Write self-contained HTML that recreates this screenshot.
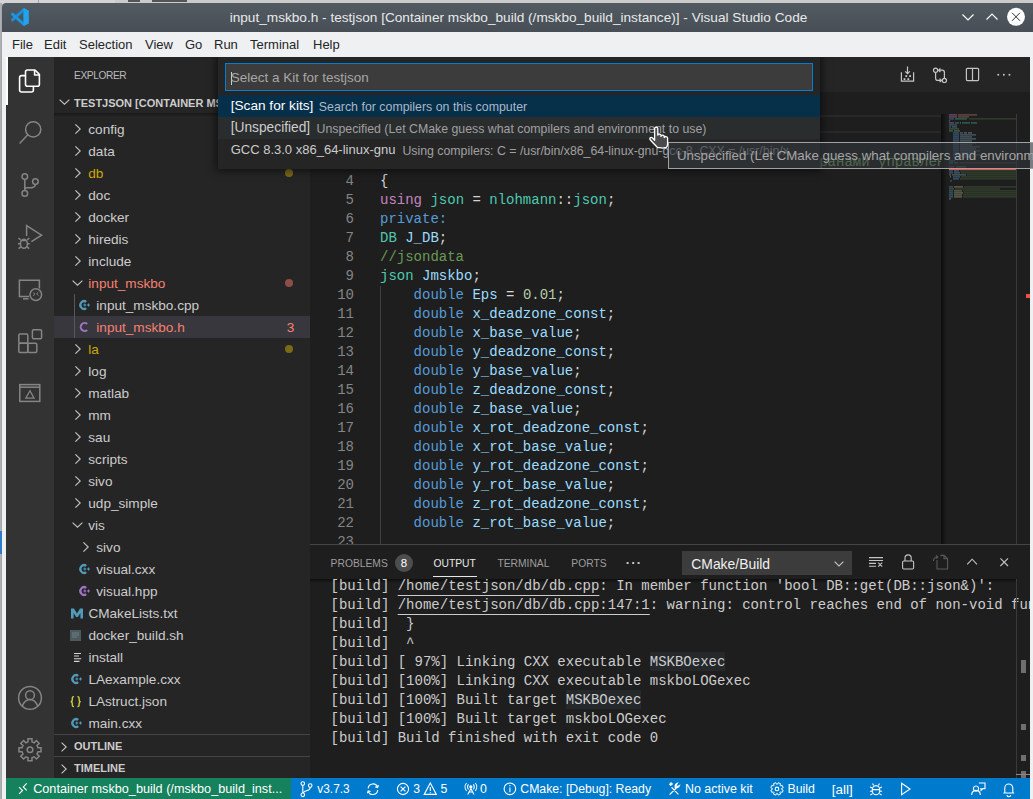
<!DOCTYPE html>
<html><head><meta charset="utf-8">
<style>
*{margin:0;padding:0;box-sizing:border-box}
html,body{width:1033px;height:799px;overflow:hidden;background:#dcdcdc;font-family:"Liberation Sans",sans-serif}
.a{position:absolute;white-space:pre}
svg{position:absolute;overflow:visible}
#win{position:absolute;left:2px;top:3px;width:1040px;height:800px;background:#eff0f1;border-radius:4px 0 0 0;overflow:hidden}
#title{left:0;top:0;width:1040px;height:28.5px;background:linear-gradient(#535b62,#474e55)}
#menu span{position:absolute;top:37px;font-size:13px;line-height:16px;color:#232627}
.mono{font-family:"Liberation Mono",monospace}
</style></head><body>
<!-- desktop behind -->
<div class="a" style="left:0;top:0;width:2px;height:799px;background:linear-gradient(90deg,#b3b5b8,#9fa1a4)"></div>
<div class="a" style="left:0;top:0;width:1033px;height:3px;background:#d4d4d4"></div>
<div class="a" style="left:115px;top:0;width:918px;height:3px;background:#cbcbcb"></div>
<div class="a" style="left:38px;top:0;width:1px;height:3px;background:#a0a4a8"></div>
<div class="a" style="left:128px;top:0;width:12px;height:2px;background:#555"></div>
<div class="a" style="left:152px;top:0;width:35px;height:2px;background:#555"></div>
<div class="a" style="left:0;top:531px;width:2px;height:23px;background:#2f7ccc"></div>
<div id="win">
  <div id="title" class="a"></div>
</div>
<!-- page-absolute layer -->
<div id="L" class="a" style="left:0;top:0;width:1033px;height:799px">
  <!-- title -->
  <div class="a" style="left:0;top:10px;width:1033px;text-align:center;color:#e8eaeb;font-size:13.64px;line-height:16px;padding-left:4px">input_mskbo.h - testjson [Container mskbo_build (/mskbo_build_instance)] - Visual Studio Code</div>
  <svg style="left:11px;top:8px" width="18" height="18" viewBox="0 0 18 18">
    <polygon points="12.6,0.3 17.6,2.6 17.6,15.4 12.6,17.7" fill="#24a7f0"/>
    <line x1="13" y1="1.5" x2="1.5" y2="11.8" stroke="#1a8fdb" stroke-width="3" stroke-linecap="round"/>
    <line x1="1.5" y1="6.2" x2="13" y2="16.5" stroke="#1a96e2" stroke-width="3" stroke-linecap="round"/>
    <polygon points="12.6,0.3 17.6,2.6 17.6,15.4 12.6,17.7" fill="#22a3ee"/>
  </svg>
  <svg style="left:962px;top:14px" width="12" height="7" viewBox="0 0 12 7"><polyline points="0.5,0.5 6,6 11.5,0.5" fill="none" stroke="#fcfcfc" stroke-width="1.2"/></svg>
  <svg style="left:986px;top:13px" width="12" height="7" viewBox="0 0 12 7"><polyline points="0.5,6.5 6,1 11.5,6.5" fill="none" stroke="#fcfcfc" stroke-width="1.2"/></svg>
  <svg style="left:1007px;top:8px" width="18" height="18" viewBox="0 0 18 18"><circle cx="9" cy="8.8" r="9" fill="#fcfcfc"/><path d="M5,4.8 L13,12.8 M13,4.8 L5,12.8" stroke="#31363b" stroke-width="1"/></svg>
  <!-- menu -->
  <div id="menu">
    <span style="left:12px">File</span><span style="left:44px">Edit</span><span style="left:79px">Selection</span><span style="left:145px">View</span><span style="left:185px">Go</span><span style="left:214px">Run</span><span style="left:250px">Terminal</span><span style="left:313px">Help</span>
  </div>
  <!-- activity bar -->
  <div class="a" style="left:6px;top:57px;width:48px;height:721px;background:#333333"></div>
  <div class="a" style="left:6px;top:57px;width:2px;height:48px;background:#ffffff"></div>
  <svg style="left:0;top:0" width="60" height="799">
    <g fill="none" stroke="#ffffff" stroke-width="1.6" stroke-linejoin="round">
      <rect x="19.6" y="75.6" width="13.8" height="16.4" rx="2"/>
      <path d="M27.5,70 H35 L39.4,74.4 V84.2 A2,2 0 0 1 37.4,86.2 H27.5 A2,2 0 0 1 25.5,84.2 V72 A2,2 0 0 1 27.5,70 Z" fill="#333333"/>
      <path d="M34.6,70 V75 H39.4"/>
    </g>
    <g fill="none" stroke="#858585" stroke-width="1.5">
      <circle cx="33.2" cy="129.4" r="7.6"/>
      <line x1="27.8" y1="134.8" x2="19.6" y2="143.4"/>
      <circle cx="24.8" cy="176.6" r="2.8"/>
      <circle cx="24.8" cy="193.4" r="2.8"/>
      <circle cx="35.4" cy="181.6" r="2.8"/>
      <path d="M24.8,179.4 V190.6 M35.4,184.4 C35.4,187 33,187.8 29,187.8 H27 C25.6,187.8 24.8,188.6 24.8,190"/>
      <path d="M26.6,236 V225.6 L41.6,235.2 L31.4,241.6"/>
      <ellipse cx="23.9" cy="243.8" rx="3.5" ry="4.5"/>
      <path d="M20.6,240.6 H27.2 M20.6,239.6 L18.4,238.2 M27.2,239.6 L29.4,238.2 M20.4,243.8 H18 M27.4,243.8 H29.8 M20.8,246.8 L18.6,248.6 M27,246.8 L29.2,248.6"/>
      <path d="M29,296.5 H19.4 V280.2 H39.4 V288.4"/>
      <line x1="23" y1="298.8" x2="28.6" y2="298.8"/>
      <circle cx="35.8" cy="294.6" r="5.8"/>
      <path d="M33.2,292.6 l1.8,1.6 l-1.8,1.6 M38.4,292.2 l-1.8,1.6 l1.8,1.6" stroke-width="1"/>
      <rect x="18.8" y="334" width="9" height="9.2" rx="1.2"/>
      <rect x="18.8" y="343.2" width="9" height="9.2" rx="1.2"/>
      <rect x="27.8" y="343.2" width="9" height="9.2" rx="1.2"/>
      <rect x="32.4" y="329.8" width="9.2" height="9" rx="1.2"/>
      <rect x="19.8" y="384.6" width="20" height="16.8"/>
      <line x1="19.8" y1="387.2" x2="39.8" y2="387.2"/>
      <path d="M30,390.8 L34,398.2 L25.8,398.2 Z" stroke-width="1.3"/>
      <circle cx="30" cy="697.9" r="11.4"/>
      <circle cx="30" cy="695.2" r="4.4"/>
      <path d="M22.2,706.2 C24,701.8 26.8,699.6 30,699.6 C33.2,699.6 36,701.8 37.8,706.2"/>
    </g>
    <path fill="none" stroke="#858585" stroke-width="1.5" d="M28.05,741.84 L27.99,738.78 L32.01,738.78 L31.95,741.84 L34.25,742.79 L36.37,740.59 L39.21,743.43 L37.01,745.55 L37.96,747.85 L41.02,747.79 L41.02,751.81 L37.96,751.75 L37.01,754.05 L39.21,756.17 L36.37,759.01 L34.25,756.81 L31.95,757.76 L32.01,760.82 L27.99,760.82 L28.05,757.76 L25.75,756.81 L23.63,759.01 L20.79,756.17 L22.99,754.05 L22.04,751.75 L18.98,751.81 L18.98,747.79 L22.04,747.85 L22.99,745.55 L20.79,743.43 L23.63,740.59 L25.75,742.79 Z"/>
    <circle cx="30" cy="749.7" r="2.8" fill="none" stroke="#858585" stroke-width="1.5"/>
  </svg>

  <!-- sidebar -->
  <div class="a" style="left:54px;top:57px;width:256px;height:721px;background:#252526"></div>
  <div class="a" style="left:74px;top:69px;font-size:10.2px;line-height:14px;color:#bbbbbb;letter-spacing:-0.4px">EXPLORER</div>
  <div class="a" style="left:54px;top:113px;width:256px;height:4px;background:linear-gradient(rgba(0,0,0,0.35),rgba(0,0,0,0))"></div>
  <svg style="left:59px;top:99px" width="11" height="6" viewBox="0 0 11 6"><polyline points="0.6,0.6 5.5,5.2 10.4,0.6" fill="none" stroke="#c5c5c5" stroke-width="1.1"/></svg>
  <div class="a" style="left:74px;top:95.8px;font-size:11px;line-height:14px;font-weight:bold;color:#cccccc">TESTJSON [CONTAINER MSKBO_BUILD (/MSKBO_BUILD_INSTANCE)]</div>
<svg style="left:74.6px;top:124.1px" width="6" height="10" viewBox="0 0 6 10"><polyline points="0.4,0.4 5.2,5 0.4,9.6" fill="none" stroke="#c5c5c5" stroke-width="1.1"/></svg>
<div class="a" style="left:88.3px;top:121.0px;font-size:13.6px;line-height:18px;color:#cccccc">config</div>
<svg style="left:74.6px;top:146.1px" width="6" height="10" viewBox="0 0 6 10"><polyline points="0.4,0.4 5.2,5 0.4,9.6" fill="none" stroke="#c5c5c5" stroke-width="1.1"/></svg>
<div class="a" style="left:88.3px;top:143.0px;font-size:13.6px;line-height:18px;color:#cccccc">data</div>
<svg style="left:74.6px;top:168.1px" width="6" height="10" viewBox="0 0 6 10"><polyline points="0.4,0.4 5.2,5 0.4,9.6" fill="none" stroke="#c5c5c5" stroke-width="1.1"/></svg>
<div class="a" style="left:88.3px;top:165.0px;font-size:13.6px;line-height:18px;color:#cca700">db</div>
<div class="a" style="left:285px;top:169.3px;width:8px;height:8px;border-radius:4px;background:#7a6a17"></div>
<svg style="left:74.6px;top:190.1px" width="6" height="10" viewBox="0 0 6 10"><polyline points="0.4,0.4 5.2,5 0.4,9.6" fill="none" stroke="#c5c5c5" stroke-width="1.1"/></svg>
<div class="a" style="left:88.3px;top:187.0px;font-size:13.6px;line-height:18px;color:#cccccc">doc</div>
<svg style="left:74.6px;top:212.1px" width="6" height="10" viewBox="0 0 6 10"><polyline points="0.4,0.4 5.2,5 0.4,9.6" fill="none" stroke="#c5c5c5" stroke-width="1.1"/></svg>
<div class="a" style="left:88.3px;top:209.0px;font-size:13.6px;line-height:18px;color:#cccccc">docker</div>
<svg style="left:74.6px;top:234.1px" width="6" height="10" viewBox="0 0 6 10"><polyline points="0.4,0.4 5.2,5 0.4,9.6" fill="none" stroke="#c5c5c5" stroke-width="1.1"/></svg>
<div class="a" style="left:88.3px;top:231.0px;font-size:13.6px;line-height:18px;color:#cccccc">hiredis</div>
<svg style="left:74.6px;top:256.1px" width="6" height="10" viewBox="0 0 6 10"><polyline points="0.4,0.4 5.2,5 0.4,9.6" fill="none" stroke="#c5c5c5" stroke-width="1.1"/></svg>
<div class="a" style="left:88.3px;top:253.0px;font-size:13.6px;line-height:18px;color:#cccccc">include</div>
<svg style="left:71.6px;top:280.3px" width="11" height="6" viewBox="0 0 11 6"><polyline points="0.6,0.6 5.5,5.2 10.4,0.6" fill="none" stroke="#c5c5c5" stroke-width="1.1"/></svg>
<div class="a" style="left:88.3px;top:275.0px;font-size:13.6px;line-height:18px;color:#f88070">input_mskbo</div>
<div class="a" style="left:285px;top:279.3px;width:8px;height:8px;border-radius:4px;background:#8c4e47"></div>
<svg style="left:79.0px;top:300.3px" width="11" height="10" viewBox="0 0 11 10"><path d="M7.2,1.9 A3.6,3.9 0 1 0 7.2,8.1" fill="none" stroke="#519aba" stroke-width="2.3"/><path d="M4.3,5 h3 M5.8,3.5 v3 M8,5 h3 M9.5,3.5 v3" stroke="#519aba" stroke-width="1.05"/></svg>
<div class="a" style="left:96.3px;top:297.0px;font-size:13.6px;line-height:18px;color:#cccccc">input_mskbo.cpp</div>
<div class="a" style="left:54px;top:316.0px;width:256px;height:22px;background:#37373d"></div>
<svg style="left:79.0px;top:322.3px" width="10" height="10" viewBox="0 0 10 10"><path d="M8.2,2 A3.9,4 0 1 0 8.2,8" fill="none" stroke="#a074c4" stroke-width="2"/></svg>
<div class="a" style="left:96.3px;top:319.0px;font-size:13.6px;line-height:18px;color:#f88070">input_mskbo.h</div>
<div class="a" style="left:286.8px;top:319.0px;font-size:13.6px;line-height:18px;color:#f88070">3</div>
<svg style="left:74.6px;top:344.1px" width="6" height="10" viewBox="0 0 6 10"><polyline points="0.4,0.4 5.2,5 0.4,9.6" fill="none" stroke="#c5c5c5" stroke-width="1.1"/></svg>
<div class="a" style="left:88.3px;top:341.0px;font-size:13.6px;line-height:18px;color:#cca700">la</div>
<div class="a" style="left:285px;top:345.3px;width:8px;height:8px;border-radius:4px;background:#7a6a17"></div>
<svg style="left:74.6px;top:366.1px" width="6" height="10" viewBox="0 0 6 10"><polyline points="0.4,0.4 5.2,5 0.4,9.6" fill="none" stroke="#c5c5c5" stroke-width="1.1"/></svg>
<div class="a" style="left:88.3px;top:363.0px;font-size:13.6px;line-height:18px;color:#cccccc">log</div>
<svg style="left:74.6px;top:388.1px" width="6" height="10" viewBox="0 0 6 10"><polyline points="0.4,0.4 5.2,5 0.4,9.6" fill="none" stroke="#c5c5c5" stroke-width="1.1"/></svg>
<div class="a" style="left:88.3px;top:385.0px;font-size:13.6px;line-height:18px;color:#cccccc">matlab</div>
<svg style="left:74.6px;top:410.1px" width="6" height="10" viewBox="0 0 6 10"><polyline points="0.4,0.4 5.2,5 0.4,9.6" fill="none" stroke="#c5c5c5" stroke-width="1.1"/></svg>
<div class="a" style="left:88.3px;top:407.0px;font-size:13.6px;line-height:18px;color:#cccccc">mm</div>
<svg style="left:74.6px;top:432.1px" width="6" height="10" viewBox="0 0 6 10"><polyline points="0.4,0.4 5.2,5 0.4,9.6" fill="none" stroke="#c5c5c5" stroke-width="1.1"/></svg>
<div class="a" style="left:88.3px;top:429.0px;font-size:13.6px;line-height:18px;color:#cccccc">sau</div>
<svg style="left:74.6px;top:454.1px" width="6" height="10" viewBox="0 0 6 10"><polyline points="0.4,0.4 5.2,5 0.4,9.6" fill="none" stroke="#c5c5c5" stroke-width="1.1"/></svg>
<div class="a" style="left:88.3px;top:451.0px;font-size:13.6px;line-height:18px;color:#cccccc">scripts</div>
<svg style="left:74.6px;top:476.1px" width="6" height="10" viewBox="0 0 6 10"><polyline points="0.4,0.4 5.2,5 0.4,9.6" fill="none" stroke="#c5c5c5" stroke-width="1.1"/></svg>
<div class="a" style="left:88.3px;top:473.0px;font-size:13.6px;line-height:18px;color:#cccccc">sivo</div>
<svg style="left:74.6px;top:498.1px" width="6" height="10" viewBox="0 0 6 10"><polyline points="0.4,0.4 5.2,5 0.4,9.6" fill="none" stroke="#c5c5c5" stroke-width="1.1"/></svg>
<div class="a" style="left:88.3px;top:495.0px;font-size:13.6px;line-height:18px;color:#cccccc">udp_simple</div>
<svg style="left:71.6px;top:522.3px" width="11" height="6" viewBox="0 0 11 6"><polyline points="0.6,0.6 5.5,5.2 10.4,0.6" fill="none" stroke="#c5c5c5" stroke-width="1.1"/></svg>
<div class="a" style="left:88.3px;top:517.0px;font-size:13.6px;line-height:18px;color:#cccccc">vis</div>
<svg style="left:82.8px;top:542.1px" width="6" height="10" viewBox="0 0 6 10"><polyline points="0.4,0.4 5.2,5 0.4,9.6" fill="none" stroke="#c5c5c5" stroke-width="1.1"/></svg>
<div class="a" style="left:96.3px;top:539.0px;font-size:13.6px;line-height:18px;color:#cccccc">sivo</div>
<svg style="left:79.0px;top:564.3px" width="11" height="10" viewBox="0 0 11 10"><path d="M7.2,1.9 A3.6,3.9 0 1 0 7.2,8.1" fill="none" stroke="#519aba" stroke-width="2.3"/><path d="M4.3,5 h3 M5.8,3.5 v3 M8,5 h3 M9.5,3.5 v3" stroke="#519aba" stroke-width="1.05"/></svg>
<div class="a" style="left:96.3px;top:561.0px;font-size:13.6px;line-height:18px;color:#cccccc">visual.cxx</div>
<svg style="left:79.0px;top:586.3px" width="11" height="10" viewBox="0 0 11 10"><path d="M7.2,1.9 A3.6,3.9 0 1 0 7.2,8.1" fill="none" stroke="#a074c4" stroke-width="2.3"/><path d="M4.3,5 h3 M5.8,3.5 v3 M8,5 h3 M9.5,3.5 v3" stroke="#a074c4" stroke-width="1.05"/></svg>
<div class="a" style="left:96.3px;top:583.0px;font-size:13.6px;line-height:18px;color:#cccccc">visual.hpp</div>
<svg style="left:70.5px;top:607.8px" width="12" height="11" viewBox="0 0 12 11"><path d="M0,10.5 V0.5 H3 L6,5.5 L9,0.5 H12 V10.5 H9.4 V5 L6.9,9 H5.1 L2.6,5 V10.5 Z" fill="#519aba"/></svg>
<div class="a" style="left:88.4px;top:605.0px;font-size:13.6px;line-height:18px;color:#cccccc">CMakeLists.txt</div>
<svg style="left:70.0px;top:629.8px" width="11" height="11" viewBox="0 0 11 11"><rect x="0" y="0" width="11" height="11" fill="#4d5a5e"/><path d="M2,3 h7 M2,5 h7 M2,7 h5" stroke="#6d8086" stroke-width="1"/></svg>
<div class="a" style="left:88.4px;top:627.0px;font-size:13.6px;line-height:18px;color:#cccccc">docker_build.sh</div>
<svg style="left:73.8px;top:652.8px" width="8" height="9" viewBox="0 0 8 9"><path d="M0,0.5 h7 M0,3 h5 M0,5.8 h7.2 M0,8.4 h5.5" stroke="#d4d7d6" stroke-width="1.1"/></svg>
<div class="a" style="left:88.4px;top:649.0px;font-size:13.6px;line-height:18px;color:#cccccc">install</div>
<svg style="left:70.5px;top:674.3px" width="11" height="10" viewBox="0 0 11 10"><path d="M7.2,1.9 A3.6,3.9 0 1 0 7.2,8.1" fill="none" stroke="#519aba" stroke-width="2.3"/><path d="M4.3,5 h3 M5.8,3.5 v3 M8,5 h3 M9.5,3.5 v3" stroke="#519aba" stroke-width="1.05"/></svg>
<div class="a" style="left:88.4px;top:671.0px;font-size:13.6px;line-height:18px;color:#cccccc">LAexample.cxx</div>
<svg style="left:70px;top:695.9px" width="12" height="12" viewBox="0 0 12 12"><path d="M4,0.6 C2.2,0.6 2.3,1.8 2.3,3.4 C2.3,4.9 1.7,5.6 0.6,5.6 C1.7,5.6 2.3,6.3 2.3,7.8 C2.3,9.4 2.2,10.6 4,10.6 M7.4,0.6 C9.2,0.6 9.1,1.8 9.1,3.4 C9.1,4.9 9.7,5.6 10.8,5.6 C9.7,5.6 9.1,6.3 9.1,7.8 C9.1,9.4 9.2,10.6 7.4,10.6" fill="none" stroke="#cbcb41" stroke-width="1.4"/></svg>
<div class="a" style="left:88.4px;top:693.0px;font-size:13.6px;line-height:18px;color:#cccccc">LAstruct.json</div>
<svg style="left:70.5px;top:718.3px" width="11" height="10" viewBox="0 0 11 10"><path d="M7.2,1.9 A3.6,3.9 0 1 0 7.2,8.1" fill="none" stroke="#519aba" stroke-width="2.3"/><path d="M4.3,5 h3 M5.8,3.5 v3 M8,5 h3 M9.5,3.5 v3" stroke="#519aba" stroke-width="1.05"/></svg>
<div class="a" style="left:88.4px;top:715.0px;font-size:13.6px;line-height:18px;color:#cccccc">main.cxx</div>
<div class="a" style="left:74px;top:294px;width:1px;height:44px;background:#585858"></div>
<div class="a" style="left:310px;top:57px;width:720px;height:487px;background:#1e1e1e;overflow:hidden">
<div class="a" style="left:0;top:0;width:720px;height:35px;background:#252526"></div>
<div class="a" style="left:70px;top:57.6px;width:600px;height:18px;border:2px solid #282828"></div>
<div class="a mono" style="left:509.2px;top:96.2px;font-size:14px;line-height:19px;color:#7fb56a">ранами управления</div>
<div class="a mono" style="left:0;top:115.3px;width:44px;text-align:right;font-size:14px;line-height:19px;color:#858585">4</div>
<div class="a mono" style="left:70px;top:115.3px;font-size:14px;line-height:19px"><span style="color:#d4d4d4">{</span></div>
<div class="a mono" style="left:0;top:134.3px;width:44px;text-align:right;font-size:14px;line-height:19px;color:#858585">5</div>
<div class="a mono" style="left:70px;top:134.3px;font-size:14px;line-height:19px"><span style="color:#c586c0">using</span><span style="color:#d4d4d4"> </span><span style="color:#4ec9b0">json</span><span style="color:#d4d4d4"> = </span><span style="color:#4ec9b0">nlohmann</span><span style="color:#d4d4d4">::</span><span style="color:#4ec9b0">json</span><span style="color:#d4d4d4">;</span></div>
<div class="a mono" style="left:0;top:153.3px;width:44px;text-align:right;font-size:14px;line-height:19px;color:#858585">6</div>
<div class="a mono" style="left:70px;top:153.3px;font-size:14px;line-height:19px"><span style="color:#569cd6">private:</span></div>
<div class="a mono" style="left:0;top:172.3px;width:44px;text-align:right;font-size:14px;line-height:19px;color:#858585">7</div>
<div class="a mono" style="left:70px;top:172.3px;font-size:14px;line-height:19px"><span style="color:#4ec9b0">DB</span><span style="color:#d4d4d4"> </span><span style="color:#9cdcfe">J_DB</span><span style="color:#d4d4d4">;</span></div>
<div class="a mono" style="left:0;top:191.3px;width:44px;text-align:right;font-size:14px;line-height:19px;color:#858585">8</div>
<div class="a mono" style="left:70px;top:191.3px;font-size:14px;line-height:19px"><span style="color:#6a9955">//jsondata</span></div>
<div class="a mono" style="left:0;top:210.3px;width:44px;text-align:right;font-size:14px;line-height:19px;color:#858585">9</div>
<div class="a mono" style="left:70px;top:210.3px;font-size:14px;line-height:19px"><span style="color:#4ec9b0">json</span><span style="color:#d4d4d4"> </span><span style="color:#9cdcfe">Jmskbo</span><span style="color:#d4d4d4">;</span></div>
<div class="a mono" style="left:0;top:229.3px;width:44px;text-align:right;font-size:14px;line-height:19px;color:#858585">10</div>
<div class="a mono" style="left:70px;top:229.3px;font-size:14px;line-height:19px"><span style="color:#d4d4d4">    </span><span style="color:#569cd6">double</span><span style="color:#d4d4d4"> </span><span style="color:#9cdcfe">Eps</span><span style="color:#d4d4d4"> = </span><span style="color:#b5cea8">0.01</span><span style="color:#d4d4d4">;</span></div>
<div class="a mono" style="left:0;top:248.3px;width:44px;text-align:right;font-size:14px;line-height:19px;color:#858585">11</div>
<div class="a mono" style="left:70px;top:248.3px;font-size:14px;line-height:19px"><span style="color:#d4d4d4">    </span><span style="color:#569cd6">double</span><span style="color:#d4d4d4"> </span><span style="color:#9cdcfe">x_deadzone_const</span><span style="color:#d4d4d4">;</span></div>
<div class="a mono" style="left:0;top:267.3px;width:44px;text-align:right;font-size:14px;line-height:19px;color:#858585">12</div>
<div class="a mono" style="left:70px;top:267.3px;font-size:14px;line-height:19px"><span style="color:#d4d4d4">    </span><span style="color:#569cd6">double</span><span style="color:#d4d4d4"> </span><span style="color:#9cdcfe">x_base_value</span><span style="color:#d4d4d4">;</span></div>
<div class="a mono" style="left:0;top:286.3px;width:44px;text-align:right;font-size:14px;line-height:19px;color:#858585">13</div>
<div class="a mono" style="left:70px;top:286.3px;font-size:14px;line-height:19px"><span style="color:#d4d4d4">    </span><span style="color:#569cd6">double</span><span style="color:#d4d4d4"> </span><span style="color:#9cdcfe">y_deadzone_const</span><span style="color:#d4d4d4">;</span></div>
<div class="a mono" style="left:0;top:305.3px;width:44px;text-align:right;font-size:14px;line-height:19px;color:#858585">14</div>
<div class="a mono" style="left:70px;top:305.3px;font-size:14px;line-height:19px"><span style="color:#d4d4d4">    </span><span style="color:#569cd6">double</span><span style="color:#d4d4d4"> </span><span style="color:#9cdcfe">y_base_value</span><span style="color:#d4d4d4">;</span></div>
<div class="a mono" style="left:0;top:324.3px;width:44px;text-align:right;font-size:14px;line-height:19px;color:#858585">15</div>
<div class="a mono" style="left:70px;top:324.3px;font-size:14px;line-height:19px"><span style="color:#d4d4d4">    </span><span style="color:#569cd6">double</span><span style="color:#d4d4d4"> </span><span style="color:#9cdcfe">z_deadzone_const</span><span style="color:#d4d4d4">;</span></div>
<div class="a mono" style="left:0;top:343.3px;width:44px;text-align:right;font-size:14px;line-height:19px;color:#858585">16</div>
<div class="a mono" style="left:70px;top:343.3px;font-size:14px;line-height:19px"><span style="color:#d4d4d4">    </span><span style="color:#569cd6">double</span><span style="color:#d4d4d4"> </span><span style="color:#9cdcfe">z_base_value</span><span style="color:#d4d4d4">;</span></div>
<div class="a mono" style="left:0;top:362.3px;width:44px;text-align:right;font-size:14px;line-height:19px;color:#858585">17</div>
<div class="a mono" style="left:70px;top:362.3px;font-size:14px;line-height:19px"><span style="color:#d4d4d4">    </span><span style="color:#569cd6">double</span><span style="color:#d4d4d4"> </span><span style="color:#9cdcfe">x_rot_deadzone_const</span><span style="color:#d4d4d4">;</span></div>
<div class="a mono" style="left:0;top:381.3px;width:44px;text-align:right;font-size:14px;line-height:19px;color:#858585">18</div>
<div class="a mono" style="left:70px;top:381.3px;font-size:14px;line-height:19px"><span style="color:#d4d4d4">    </span><span style="color:#569cd6">double</span><span style="color:#d4d4d4"> </span><span style="color:#9cdcfe">x_rot_base_value</span><span style="color:#d4d4d4">;</span></div>
<div class="a mono" style="left:0;top:400.3px;width:44px;text-align:right;font-size:14px;line-height:19px;color:#858585">19</div>
<div class="a mono" style="left:70px;top:400.3px;font-size:14px;line-height:19px"><span style="color:#d4d4d4">    </span><span style="color:#569cd6">double</span><span style="color:#d4d4d4"> </span><span style="color:#9cdcfe">y_rot_deadzone_const</span><span style="color:#d4d4d4">;</span></div>
<div class="a mono" style="left:0;top:419.3px;width:44px;text-align:right;font-size:14px;line-height:19px;color:#858585">20</div>
<div class="a mono" style="left:70px;top:419.3px;font-size:14px;line-height:19px"><span style="color:#d4d4d4">    </span><span style="color:#569cd6">double</span><span style="color:#d4d4d4"> </span><span style="color:#9cdcfe">y_rot_base_value</span><span style="color:#d4d4d4">;</span></div>
<div class="a mono" style="left:0;top:438.3px;width:44px;text-align:right;font-size:14px;line-height:19px;color:#858585">21</div>
<div class="a mono" style="left:70px;top:438.3px;font-size:14px;line-height:19px"><span style="color:#d4d4d4">    </span><span style="color:#569cd6">double</span><span style="color:#d4d4d4"> </span><span style="color:#9cdcfe">z_rot_deadzone_const</span><span style="color:#d4d4d4">;</span></div>
<div class="a mono" style="left:0;top:457.3px;width:44px;text-align:right;font-size:14px;line-height:19px;color:#858585">22</div>
<div class="a mono" style="left:70px;top:457.3px;font-size:14px;line-height:19px"><span style="color:#d4d4d4">    </span><span style="color:#569cd6">double</span><span style="color:#d4d4d4"> </span><span style="color:#9cdcfe">z_rot_base_value</span><span style="color:#d4d4d4">;</span></div>
<div class="a mono" style="left:0;top:476.3px;width:44px;text-align:right;font-size:14px;line-height:19px;color:#858585">23</div>
<div class="a" style="left:70px;top:228.5px;width:1px;height:300px;background:#404040"></div>
<div class="a" style="left:631px;top:57px;width:75px;height:431px;background:#1e1e1e"></div>
<div class="a" style="left:631px;top:57px;width:6px;height:431px;background:linear-gradient(90deg,#000 0,rgba(0,0,0,0) 6px);opacity:0.6"></div>
<div class="a" style="left:706px;top:57px;width:1px;height:431px;background:#3a3a3a"></div>
<div class="a" style="left:716px;top:237px;width:4px;height:4px;background:#f14c4c"></div>
</div>
<svg style="left:0;top:0" width="1033" height="100"><g fill="none" stroke="#c5c5c5" stroke-width="1.2">
<path d="M901.4,72.2 V81.2 H913.6 V72.2"/><path d="M907.5,66.6 V73.6 M905.2,71.4 L907.5,73.7 L909.8,71.4"/>
<circle cx="935.6" cy="70.2" r="2.1"/><circle cx="944.4" cy="80.4" r="2.1"/>
<path d="M935.6,72.3 V78.2 Q935.6,80.4 937.8,80.4 H941.4 M939.6,78.6 L941.4,80.4 L939.6,82.2"/>
<path d="M944.4,78.3 V72.4 Q944.4,70.2 942.2,70.2 H938.6 M940.4,68.4 L938.6,70.2 L940.4,72"/>
<rect x="966.4" y="68.4" width="12.2" height="12.2" rx="1"/><path d="M972.5,68.4 V80.6"/>
</g><g fill="#c5c5c5"><rect x="905.4" y="75.2" width="1.8" height="1.8"/><rect x="909.2" y="75.2" width="1.8" height="1.8"/><rect x="903.6" y="78.2" width="1.8" height="1.8"/><rect x="907.4" y="78.2" width="1.8" height="1.8"/>
<rect x="997.4" y="73.9" width="1.7" height="1.7"/><rect x="1003" y="73.9" width="1.7" height="1.7"/><rect x="1008.6" y="73.9" width="1.7" height="1.7"/></g></svg>
<svg style="left:0;top:0" width="1033" height="799">
<rect x="949" y="114" width="8" height="1.7" fill-opacity="0.65" fill="rgba(197,134,192,0.55)"/>
<rect x="958" y="114" width="19" height="1.7" fill-opacity="0.65" fill="rgba(206,145,120,0.5)"/>
<rect x="949" y="116" width="8" height="1.7" fill-opacity="0.65" fill="rgba(197,134,192,0.55)"/>
<rect x="958" y="116" width="11" height="1.7" fill-opacity="0.65" fill="rgba(206,145,120,0.5)"/>
<rect x="949" y="118" width="5" height="1.7" fill-opacity="0.65" fill="rgba(86,156,214,0.55)"/>
<rect x="955" y="118" width="12" height="1.7" fill-opacity="0.65" fill="rgba(78,201,176,0.5)"/>
<rect x="969" y="118" width="47" height="1.7" fill-opacity="0.65" fill="rgba(106,153,85,0.35)"/>
<rect x="949" y="120" width="1" height="1.7" fill-opacity="0.65" fill="rgba(212,212,212,0.45)"/>
<rect x="949" y="122" width="5" height="1.7" fill-opacity="0.65" fill="rgba(197,134,192,0.55)"/>
<rect x="955" y="122" width="4" height="1.7" fill-opacity="0.65" fill="rgba(78,201,176,0.5)"/>
<rect x="960" y="122" width="1" height="1.7" fill-opacity="0.65" fill="rgba(212,212,212,0.45)"/>
<rect x="962" y="122" width="8" height="1.7" fill-opacity="0.65" fill="rgba(78,201,176,0.5)"/>
<rect x="971" y="122" width="6" height="1.7" fill-opacity="0.65" fill="rgba(78,201,176,0.5)"/>
<rect x="949" y="124" width="8" height="1.7" fill-opacity="0.65" fill="rgba(86,156,214,0.55)"/>
<rect x="949" y="126" width="2" height="1.7" fill-opacity="0.65" fill="rgba(78,201,176,0.5)"/>
<rect x="952" y="126" width="5" height="1.7" fill-opacity="0.65" fill="rgba(156,220,254,0.4)"/>
<rect x="949" y="128" width="10" height="1.7" fill-opacity="0.65" fill="rgba(106,153,85,0.55)"/>
<rect x="949" y="130" width="4" height="1.7" fill-opacity="0.65" fill="rgba(78,201,176,0.5)"/>
<rect x="954" y="130" width="6" height="1.7" fill-opacity="0.65" fill="rgba(156,220,254,0.4)"/>
<rect x="953" y="132" width="6" height="1.7" fill-opacity="0.65" fill="rgba(86,156,214,0.55)"/>
<rect x="960" y="132" width="3" height="1.7" fill-opacity="0.65" fill="rgba(156,220,254,0.4)"/>
<rect x="964" y="132" width="3" height="1.7" fill-opacity="0.65" fill="rgba(212,212,212,0.45)"/>
<rect x="968" y="132" width="4" height="1.7" fill-opacity="0.65" fill="rgba(181,206,168,0.5)"/>
<rect x="953" y="134" width="6" height="1.7" fill-opacity="0.65" fill="rgba(86,156,214,0.55)"/>
<rect x="960" y="134" width="16" height="1.7" fill-opacity="0.65" fill="rgba(156,220,254,0.4)"/>
<rect x="953" y="136" width="6" height="1.7" fill-opacity="0.65" fill="rgba(86,156,214,0.55)"/>
<rect x="960" y="136" width="12" height="1.7" fill-opacity="0.65" fill="rgba(156,220,254,0.4)"/>
<rect x="953" y="138" width="6" height="1.7" fill-opacity="0.65" fill="rgba(86,156,214,0.55)"/>
<rect x="960" y="138" width="16" height="1.7" fill-opacity="0.65" fill="rgba(156,220,254,0.4)"/>
<rect x="953" y="140" width="6" height="1.7" fill-opacity="0.65" fill="rgba(86,156,214,0.55)"/>
<rect x="960" y="140" width="12" height="1.7" fill-opacity="0.65" fill="rgba(156,220,254,0.4)"/>
<rect x="953" y="142" width="6" height="1.7" fill-opacity="0.65" fill="rgba(86,156,214,0.55)"/>
<rect x="960" y="142" width="16" height="1.7" fill-opacity="0.65" fill="rgba(156,220,254,0.4)"/>
<rect x="953" y="144" width="6" height="1.7" fill-opacity="0.65" fill="rgba(86,156,214,0.55)"/>
<rect x="960" y="144" width="12" height="1.7" fill-opacity="0.65" fill="rgba(156,220,254,0.4)"/>
<rect x="953" y="146" width="6" height="1.7" fill-opacity="0.65" fill="rgba(86,156,214,0.55)"/>
<rect x="960" y="146" width="20" height="1.7" fill-opacity="0.65" fill="rgba(156,220,254,0.4)"/>
<rect x="953" y="148" width="6" height="1.7" fill-opacity="0.65" fill="rgba(86,156,214,0.55)"/>
<rect x="960" y="148" width="16" height="1.7" fill-opacity="0.65" fill="rgba(156,220,254,0.4)"/>
<rect x="953" y="150" width="6" height="1.7" fill-opacity="0.65" fill="rgba(86,156,214,0.55)"/>
<rect x="960" y="150" width="20" height="1.7" fill-opacity="0.65" fill="rgba(156,220,254,0.4)"/>
<rect x="953" y="152" width="6" height="1.7" fill-opacity="0.65" fill="rgba(86,156,214,0.55)"/>
<rect x="960" y="152" width="16" height="1.7" fill-opacity="0.65" fill="rgba(156,220,254,0.4)"/>
<rect x="953" y="154" width="6" height="1.7" fill-opacity="0.65" fill="rgba(86,156,214,0.55)"/>
<rect x="960" y="154" width="20" height="1.7" fill-opacity="0.65" fill="rgba(156,220,254,0.4)"/>
<rect x="953" y="156" width="6" height="1.7" fill-opacity="0.65" fill="rgba(86,156,214,0.55)"/>
<rect x="960" y="156" width="16" height="1.7" fill-opacity="0.65" fill="rgba(156,220,254,0.4)"/>
<rect x="949" y="158" width="1" height="1.7" fill-opacity="0.65" fill="rgba(212,212,212,0.45)"/>
<rect x="949" y="160" width="6" height="1.7" fill-opacity="0.65" fill="rgba(86,156,214,0.55)"/>
<rect x="949" y="162" width="4" height="1.7" fill-opacity="0.65" fill="rgba(78,201,176,0.5)"/>
<rect x="954" y="162" width="4" height="1.7" fill-opacity="0.65" fill="rgba(156,220,254,0.4)"/>
<rect x="960" y="162" width="56" height="1.7" fill-opacity="0.65" fill="rgba(106,153,85,0.35)"/>
<rect x="949" y="166" width="5" height="1.7" fill-opacity="0.65" fill="rgba(86,156,214,0.55)"/>
<rect x="956" y="166" width="10" height="1.7" fill-opacity="0.65" fill="rgba(78,201,176,0.5)"/>
<rect x="949" y="170" width="4" height="1.7" fill-opacity="0.65" fill="rgba(86,156,214,0.55)"/>
<rect x="954" y="170" width="5" height="1.7" fill-opacity="0.65" fill="rgba(156,220,254,0.4)"/>
<rect x="960" y="170" width="56" height="1.7" fill-opacity="0.65" fill="rgba(106,153,85,0.35)"/>
<rect x="949" y="172" width="4" height="1.7" fill-opacity="0.65" fill="rgba(86,156,214,0.55)"/>
<rect x="954" y="172" width="6" height="1.7" fill-opacity="0.65" fill="rgba(156,220,254,0.4)"/>
<rect x="961" y="172" width="55" height="1.7" fill-opacity="0.65" fill="rgba(106,153,85,0.35)"/>
<rect x="949" y="174" width="2" height="1.7" fill-opacity="0.65" fill="rgba(206,145,120,0.5)"/>
<rect x="952" y="174" width="14" height="1.7" fill-opacity="0.65" fill="rgba(156,220,254,0.4)"/>
<rect x="967" y="174" width="49" height="1.7" fill-opacity="0.65" fill="rgba(106,153,85,0.35)"/>
<rect x="950" y="176" width="1" height="1.7" fill-opacity="0.65" fill="rgba(212,212,212,0.45)"/>
<rect x="953" y="176" width="7" height="1.7" fill-opacity="0.65" fill="rgba(86,156,214,0.55)"/>
<rect x="961" y="176" width="55" height="1.7" fill-opacity="0.65" fill="rgba(106,153,85,0.35)"/>
<rect x="953" y="178" width="6" height="1.7" fill-opacity="0.65" fill="rgba(86,156,214,0.55)"/>
<rect x="960" y="178" width="56" height="1.7" fill-opacity="0.65" fill="rgba(106,153,85,0.35)"/>
<rect x="950" y="180" width="2" height="1.7" fill-opacity="0.65" fill="rgba(106,153,85,0.55)"/>
<rect x="949" y="186" width="4" height="1.7" fill-opacity="0.65" fill="rgba(86,156,214,0.55)"/>
<rect x="954" y="186" width="9" height="1.7" fill-opacity="0.65" fill="rgba(220,220,170,0.45)"/>
<rect x="964" y="186" width="52" height="1.7" fill-opacity="0.65" fill="rgba(106,153,85,0.35)"/>
<rect x="949" y="188" width="5" height="1.7" fill-opacity="0.65" fill="rgba(106,153,85,0.55)"/>
<rect x="955" y="188" width="45" height="1.7" fill-opacity="0.65" fill="rgba(106,153,85,0.35)"/>
<rect x="949" y="190" width="4" height="1.7" fill-opacity="0.65" fill="rgba(86,156,214,0.55)"/>
<rect x="954" y="190" width="8" height="1.7" fill-opacity="0.65" fill="rgba(220,220,170,0.45)"/>
<rect x="963" y="190" width="53" height="1.7" fill-opacity="0.65" fill="rgba(106,153,85,0.35)"/>
<rect x="949" y="192" width="4" height="1.7" fill-opacity="0.65" fill="rgba(86,156,214,0.55)"/>
<rect x="954" y="192" width="9" height="1.7" fill-opacity="0.65" fill="rgba(220,220,170,0.45)"/>
<rect x="964" y="192" width="52" height="1.7" fill-opacity="0.65" fill="rgba(106,153,85,0.35)"/>
<rect x="949" y="194" width="4" height="1.7" fill-opacity="0.65" fill="rgba(86,156,214,0.55)"/>
<rect x="954" y="194" width="8" height="1.7" fill-opacity="0.65" fill="rgba(220,220,170,0.45)"/>
<rect x="963" y="194" width="53" height="1.7" fill-opacity="0.65" fill="rgba(106,153,85,0.35)"/>
<rect x="949" y="196" width="4" height="1.7" fill-opacity="0.65" fill="rgba(86,156,214,0.55)"/>
<rect x="954" y="196" width="8" height="1.7" fill-opacity="0.65" fill="rgba(220,220,170,0.45)"/>
<rect x="963" y="196" width="53" height="1.7" fill-opacity="0.65" fill="rgba(106,153,85,0.35)"/>
<rect x="949" y="198" width="2" height="1.7" fill-opacity="0.65" fill="rgba(212,212,212,0.45)"/>
<rect x="949" y="168" width="67" height="2" fill="#f14c4c"/>
</svg>
<div class="a" style="left:310px;top:544px;width:720px;height:234px;background:#1e1e1e;border-top:1px solid #454545"></div>
<div class="a" style="left:330.6px;top:557px;font-size:10.3px;line-height:14px;color:#9d9d9d;letter-spacing:0px">PROBLEMS</div>
<div class="a" style="left:433.5px;top:557px;font-size:10.3px;line-height:14px;color:#e7e7e7;letter-spacing:0px">OUTPUT</div>
<div class="a" style="left:497.4px;top:557px;font-size:10.3px;line-height:14px;color:#9d9d9d;letter-spacing:0px">TERMINAL</div>
<div class="a" style="left:571.3px;top:557px;font-size:10.3px;line-height:14px;color:#9d9d9d;letter-spacing:0px">PORTS</div>
<div class="a" style="left:395px;top:554px;width:18px;height:18px;border-radius:9px;background:#4d4d4d;color:#fff;font-size:11.5px;line-height:18px;text-align:center">8</div>
<div class="a" style="left:433px;top:576px;width:44px;height:1px;background:#e7e7e7"></div>
<svg style="left:0;top:0" width="1033" height="799"><g fill="#c5c5c5"><rect x="626.6" y="562" width="2" height="2"/><rect x="632.2" y="562" width="2" height="2"/><rect x="637.6" y="562" width="2" height="2"/></g></svg>
<div class="a" style="left:682px;top:551px;width:170px;height:24px;background:#3c3c3c"></div>
<div class="a" style="left:691.3px;top:555.6px;font-size:13.9px;line-height:16px;color:#f0f0f0">CMake/Build</div>
<svg style="left:0;top:0" width="1033" height="799"><polyline points="834.6,561.6 839,566 843.4,561.6" fill="none" stroke="#c5c5c5" stroke-width="1.1"/></svg>
<svg style="left:0;top:0" width="1033" height="799"><g fill="none" stroke="#c5c5c5" stroke-width="1.1">
<path d="M869,557.6 H883 M869,560.5 H883 M869,563.4 H876 M869,566.3 H876 M878.2,562.6 L882.2,566.6 M882.2,562.6 L878.2,566.6"/>
<rect x="902.6" y="561" width="11" height="8" rx="1.2"/><path d="M905,561 V558 A3.1,3.1 0 0 1 911.2,558 V561"/>
<path d="M967.2,564.4 L972.1,559.2 L977,564.4"/>
<path d="M1000.4,558.4 L1008,566 M1008,558.4 L1000.4,566"/>
</g><g fill="none" stroke="#5a5a5a" stroke-width="1.1"><path d="M937,560 V569 H947.6 V558.8 L944,555.4 H940.4 M944,555.4 V558.8 H947.6 M933.4,561 C933.6,558.2 935,557 937.6,557 M936,555.4 L937.8,557 L936,558.6"/></g></svg>
<div class="a" style="left:310px;top:578.5px;width:706px;height:4px;background:linear-gradient(rgba(0,0,0,0.55),rgba(0,0,0,0))"></div>
<div class="a" style="left:649.7px;top:651.7px;width:75.6px;height:19px;background:#25292c"></div>
<div class="a" style="left:565.7px;top:689.7px;width:75.6px;height:19px;background:#25292c"></div>
<div class="a" style="left:310px;top:579px;width:720px;height:199px;overflow:hidden">
<div class="a mono" style="left:20.5px;top:-2.5px;font-size:14px;line-height:19px;color:#cccccc">[build] <span style="text-decoration:underline;text-underline-offset:4.5px">/home/testjson/db/db.cpp</span>: In member function &#39;bool DB::get(DB::json&)&#39;:</div>
<div class="a mono" style="left:20.5px;top:16.5px;font-size:14px;line-height:19px;color:#cccccc">[build] <span style="text-decoration:underline;text-underline-offset:4.5px">/home/testjson/db/db.cpp:147:1</span>: warning: control reaches end of non-void function [-Wreturn-type]</div>
<div class="a mono" style="left:20.5px;top:35.5px;font-size:14px;line-height:19px;color:#cccccc">[build]  }</div>
<div class="a mono" style="left:20.5px;top:54.5px;font-size:14px;line-height:19px;color:#cccccc">[build]  ^</div>
<div class="a mono" style="left:20.5px;top:73.5px;font-size:14px;line-height:19px;color:#cccccc">[build] [ 97%] Linking CXX executable MSKBOexec</div>
<div class="a mono" style="left:20.5px;top:92.5px;font-size:14px;line-height:19px;color:#cccccc">[build] [100%] Linking CXX executable mskboLOGexec</div>
<div class="a mono" style="left:20.5px;top:111.5px;font-size:14px;line-height:19px;color:#cccccc">[build] [100%] Built target MSKBOexec</div>
<div class="a mono" style="left:20.5px;top:130.5px;font-size:14px;line-height:19px;color:#cccccc">[build] [100%] Built target mskboLOGexec</div>
<div class="a mono" style="left:20.5px;top:149.5px;font-size:14px;line-height:19px;color:#cccccc">[build] Build finished with exit code 0</div>
</div>
<div class="a" style="left:1016px;top:579px;width:1px;height:199px;background:#3a3a3a"></div>
<div class="a" style="left:1021px;top:660px;width:5px;height:13px;background:#6f6f6f"></div>
<div class="a" style="left:1021px;top:724px;width:5px;height:6px;background:#6f6f6f"></div>
<div class="a" style="left:1021px;top:755px;width:5px;height:6px;background:#6f6f6f"></div>
<div class="a" style="left:1021px;top:771px;width:5px;height:7px;background:#6f6f6f"></div>
<div class="a" style="left:1016px;top:774px;width:14px;height:1px;background:#8a8a8a"></div>
<div class="a" style="left:6px;top:778px;width:1024px;height:22px;background:#007acc"></div>
<div class="a" style="left:6px;top:778px;width:285.3px;height:22px;background:#16825d"></div>
<div class="a" style="left:33.2px;top:782px;font-size:12.66px;line-height:15px;color:#ffffff">Container mskbo_build (/mskbo_build_inst...</div>
<div class="a" style="left:317.3px;top:782px;font-size:11.9px;line-height:15px;color:#ffffff">v3.7.3</div>
<div class="a" style="left:413.3px;top:782px;font-size:12.3px;line-height:15px;color:#ffffff">3</div>
<div class="a" style="left:440.5px;top:782px;font-size:12.3px;line-height:15px;color:#ffffff">5</div>
<div class="a" style="left:480px;top:782px;font-size:12.3px;line-height:15px;color:#ffffff">0</div>
<div class="a" style="left:520.3px;top:782px;font-size:12.25px;line-height:15px;color:#ffffff">CMake: [Debug]: Ready</div>
<div class="a" style="left:685px;top:782px;font-size:12.45px;line-height:15px;color:#ffffff">No active kit</div>
<div class="a" style="left:787.5px;top:782px;font-size:12.3px;line-height:15px;color:#ffffff">Build</div>
<div class="a" style="left:831.8px;top:782px;font-size:13.4px;line-height:15px;color:#ffffff">[all]</div>
<svg style="left:0;top:0" width="1033" height="799"><g fill="none" stroke="#ffffff" stroke-width="1.1">
<path d="M19.1,787.2 L22.5,790.5 L19.1,793.8 M26.7,783.4 L23.3,786.9 L26.7,790.4" stroke-width="1.1"/>
<circle cx="302.8" cy="783.6" r="1.8"/><circle cx="302.8" cy="794.8" r="1.8"/><circle cx="310.2" cy="785.6" r="1.8"/>
<path d="M302.8,785.4 V793 M310.2,787.4 C310.2,790.4 307,790.4 304.4,791.6 L303.2,792.8"/>
<path d="M368.1,788.4 A4.9,4.9 0 0 1 377.6,787.2 M377.7,790 A4.9,4.9 0 0 1 368.2,791.2 M375.2,786.9 L377.6,787.5 L378.5,785.2 M370.6,791.5 L368.2,790.9 L367.3,793.2"/>
<circle cx="403" cy="789" r="5.6"/><path d="M400.6,786.6 L405.4,791.4 M405.4,786.6 L400.6,791.4"/>
<path d="M430.3,783 L436.4,794.4 H424.2 Z"/><path d="M430.3,787 V791 M430.3,792.2 V793.2"/>
<path d="M470.9,788.4 L467.8,794.4 M470.9,788.4 L474,794.4 M468.8,792 H473 M468.6,784.4 A3.4,3.4 0 0 0 468.6,789.4 M473.2,784.4 A3.4,3.4 0 0 1 473.2,789.4 M466.6,783 A6,6 0 0 0 466.6,791 M475.2,783 A6,6 0 0 1 475.2,791"/><circle cx="470.9" cy="786.8" r="1.1" fill="#fff"/>
<circle cx="509.9" cy="788.8" r="5.8"/><path d="M509.9,787.4 V792.2 M509.9,785 V786.2"/>
<path d="M678.4,794.4 L671.6,787.4 M670.8,785.2 L669.8,784.2 L671,783 L672.2,784 Z M669.6,794.6 L676,788.2 A2.9,2.9 0 0 1 677.2,783.4 L676,785.4 L677.4,786.8 L679.4,785.6 A2.9,2.9 0 0 1 674.6,786.8" stroke-width="1.3"/>
<circle cx="777" cy="788.9" r="1.8"/><path d="M777.44,784.22 L778.21,782.72 L780.52,783.67 L780.00,785.28 L780.62,785.90 L782.23,785.38 L783.18,787.69 L781.68,788.46 L781.68,789.34 L783.18,790.11 L782.23,792.42 L780.62,791.90 L780.00,792.52 L780.52,794.13 L778.21,795.08 L777.44,793.58 L776.56,793.58 L775.79,795.08 L773.48,794.13 L774.00,792.52 L773.38,791.90 L771.77,792.42 L770.82,790.11 L772.32,789.34 L772.32,788.46 L770.82,787.69 L771.77,785.38 L773.38,785.90 L774.00,785.28 L773.48,783.67 L775.79,782.72 L776.56,784.22 Z" stroke-width="1" stroke-linejoin="round"/>
<ellipse cx="876" cy="790.2" rx="3.8" ry="4.6"/><path d="M872.2,789.6 H879.8 M870,787 L872.4,788 M882,787 L879.6,788 M870,791.2 H872.2 M882,791.2 H879.8 M870.4,795 L872.6,793.6 M881.6,795 L879.4,793.6 M873.6,785.6 L872.6,783.4 M878.4,785.6 L879.4,783.4"/>
<path d="M901.6,783.2 L910,789 L901.6,794.8 Z"/>
<path d="M976,786 A2.6,2.6 0 1 0 976.01,786 M971.6,795 C972,791.6 973.6,790.4 976,790.4 C978.4,790.4 980,791.6 980.4,795 M978.8,783 H985 V788.6 H982.8 L981,790.4 V788.6 H980.4"/>
<path d="M1003.4,793 H1014.2 M1004.8,793 V788 A3.9,3.9 0 0 1 1012.8,788 V793 M1007,795 A1.8,1.8 0 0 0 1010.6,795"/>
</g></svg>
<div class="a" style="left:200px;top:57px;width:640px;height:130px;overflow:hidden"><div class="a" style="left:18px;top:0;width:602px;height:112px;background:#252526;box-shadow:0 0 8px 2px rgba(0,0,0,0.55)"></div></div>
<div class="a" style="left:225px;top:62.5px;width:588px;height:28.5px;background:#3c3c3c;border:1px solid #007fd4"></div>
<div class="a" style="left:230.5px;top:72px;width:1px;height:13px;background:#cccccc"></div>
<div class="a" style="left:230.7px;top:69.5px;font-size:13.5px;line-height:16px;color:#a6a6a6">Select a Kit for testjson</div>
<div class="a" style="left:218px;top:95px;width:602px;height:22px;background:#062f4a"></div>
<div class="a" style="left:218px;top:117px;width:602px;height:22px;background:#2a2d2e"></div>
<div class="a" style="left:230.7px;top:98.4px;font-size:13.65px;line-height:16px;color:#ffffff">[Scan for kits]</div>
<div class="a" style="left:318.8px;top:98.9px;font-size:12.38px;line-height:16px;color:#a8b9c8">Search for compilers on this computer</div>
<div class="a" style="left:230.7px;top:120.3px;font-size:13.75px;line-height:16px;color:#cccccc">[Unspecified]</div>
<div class="a" style="left:316.5px;top:120.8px;font-size:12.33px;line-height:16px;color:#a0a0a0">Unspecified (Let CMake guess what compilers and environment to use)</div>
<div class="a" style="left:230.7px;top:142.2px;font-size:13.0px;line-height:16px;color:#cccccc">GCC 8.3.0 x86_64-linux-gnu</div>
<div class="a" style="left:402.4px;top:142.7px;font-size:12.33px;line-height:16px;color:#a0a0a0">Using compilers: C = /usr/bin/x86_64-linux-gnu-gcc-8, CXX = /usr/bin/x...</div>
<div class="a" style="left:668px;top:142px;width:380px;height:27px;background:rgba(50,55,60,0.62);border:1.3px solid #a2a2a2"></div>
<div class="a" style="left:676.9px;top:147.8px;font-size:13.3px;line-height:16px;color:#a6a6a6">Unspecified (Let CMake guess what compilers and environment to use)</div>
<svg style="left:646px;top:124px" width="30" height="28" viewBox="0 0 30 28"><path d="M8.6,4.6 C8.6,2.6 11.8,2.6 11.8,4.6 V11.2 C12,9.6 15,9.6 15,11.4 V12.4 C15.2,10.8 18.2,10.8 18.2,12.6 V13.6 C18.6,12 21.6,12.2 21.6,14 V19.6 C21.6,22.4 20.4,24.4 18.8,23.6 L18.8,23.6 C18,24.2 16,24.2 13.6,23.6 H11.6 C9.4,21.2 6.8,18.6 4.2,15.8 C3,14.4 4.8,12.6 6.2,13.8 L8.6,16.2 Z" fill="#4b4b4b" stroke="#ffffff" stroke-width="1.3" stroke-linejoin="round"/></svg>
  <div class="a" style="left:54px;top:734px;width:256px;height:1px;background:#454545"></div>
  <div class="a" style="left:54px;top:756px;width:256px;height:1px;background:#454545"></div>
  <svg style="left:61.4px;top:741.5px" width="6" height="10" viewBox="0 0 6 10"><polyline points="0.6,0.6 5.2,5 0.6,9.4" fill="none" stroke="#c5c5c5" stroke-width="1.1"/></svg>
  <svg style="left:61.4px;top:763.5px" width="6" height="10" viewBox="0 0 6 10"><polyline points="0.6,0.6 5.2,5 0.6,9.4" fill="none" stroke="#c5c5c5" stroke-width="1.1"/></svg>
  <div class="a" style="left:74px;top:739px;font-size:11px;line-height:14px;font-weight:bold;color:#cccccc">OUTLINE</div>
  <div class="a" style="left:74px;top:761px;font-size:11px;line-height:14px;font-weight:bold;color:#cccccc">TIMELINE</div>
</div>
</body></html>
